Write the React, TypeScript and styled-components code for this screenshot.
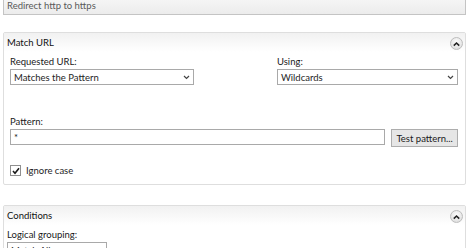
import React from 'react';
import styled, { createGlobalStyle } from 'styled-components';

const GlobalStyle = createGlobalStyle`
  html, body {
    margin: 0;
    padding: 0;
    background: #ffffff;
    overflow: hidden;
  }
  body {
    font-family: Lato, "Open Sans", "Liberation Sans", sans-serif;
    font-size: 9.5px;
    color: #1e1e1e;
  }
`

const Page = styled.div`
  width: 463px;
  padding-left: 3px;
  display: flex;
  flex-direction: column;
`

const NameBox = styled.div`
  margin-top: -3px;
  height: 17px;
  border: 1px solid #c4c4c4;
  border-top: 0;
  background: linear-gradient(#f7f7f7, #ececec);
  color: #5a5a5a;
  display: flex;
  align-items: center;
  padding: 0 3px;
`

const Panel = styled.section<{ $top: number }>`
  margin-top: ${props => props.$top}px;
  border: 1px solid #dedede;
  border-radius: 2px;
  background: #ffffff;
`

const PanelHeader = styled.div`
  height: 19px;
  display: flex;
  align-items: center;
  justify-content: space-between;
  padding: 0 2px 0 3px;
  background: linear-gradient(#f1f1f1, #ffffff);
  color: #111;
`

const CollapseButton = styled.button`
  width: 13px;
  height: 13px;
  padding: 0;
  border-radius: 50%;
  border: 1px solid #bdbdbd;
  background: radial-gradient(circle at 50% 35%, #fdfdfd, #d8d8d8);
  display: flex;
  align-items: center;
  justify-content: center;
  margin-top: 2px;
`

const PanelBody = styled.div<{ $inset: number }>`
  padding: 4px 7px 8px ${props => props.$inset}px;
`

const Label = styled.div`
  line-height: 12px;
  margin-bottom: 1px;
  color: #1a1a1a;
`

const TopRow = styled.div`
  display: grid;
  grid-template-columns: 184px 181px;
  column-gap: 83px;
`

const Field = styled.div`
  display: flex;
  flex-direction: column;
`

const Select = styled.div<{ $width?: number }>`
  height: 14px;
  width: ${props => (props.$width ? `${props.$width}px` : 'auto')};
  border: 1px solid #a9a9a9;
  background: #ffffff;
  display: flex;
  align-items: center;
  justify-content: space-between;
  padding: 0 3px 0 3px;
`

const PatternBlock = styled.div`
  margin-top: 31px;
`

const PatternRow = styled.div`
  display: flex;
  align-items: flex-start;
  gap: 6px;
`

const TextInput = styled.div`
  width: 368px;
  height: 14px;
  border: 1px solid #a9a9a9;
  background: #ffffff;
  padding: 0 3px;
  display: flex;
  align-items: center;
`

const TestButton = styled.button`
  width: 67px;
  height: 18px;
  border: 1px solid #adadad;
  background: #e6e6e6;
  font: inherit;
  color: #1a1a1a;
  padding: 0;
`

const CheckRow = styled.label`
  margin-top: 18px;
  display: flex;
  align-items: center;
  gap: 5px;
`

const CheckBox = styled.span`
  width: 9px;
  height: 9px;
  border: 1px solid #8f8f8f;
  background: #ffffff;
  display: flex;
  align-items: center;
  justify-content: center;
`

const Chevron = () => (
  <svg width="7" height="5" viewBox="0 0 7 5">
    <path d="M1 1 L3.5 3.5 L6 1" fill="none" stroke="#444" strokeWidth="1.2" />
  </svg>
)

const UpIcon = () => (
  <svg width="7" height="6" viewBox="0 0 7 6">
    <path d="M0.8 4.6 L3.5 2 L6.2 4.6" fill="none" stroke="#222" strokeWidth="1.6" />
  </svg>
)

const App = () => {
  return (
    <>
      <GlobalStyle />
      <Page>
        <NameBox>Redirect http to https</NameBox>

        <Panel $top={17}>
          <PanelHeader>
            <span>Match URL</span>
            <CollapseButton><UpIcon /></CollapseButton>
          </PanelHeader>
          <PanelBody $inset={6}>
            <TopRow>
              <Field>
                <Label>Requested URL:</Label>
                <Select>Matches the Pattern<Chevron /></Select>
              </Field>
              <Field>
                <Label>Using:</Label>
                <Select>Wildcards<Chevron /></Select>
              </Field>
            </TopRow>
            <PatternBlock>
              <Label>Pattern:</Label>
              <PatternRow>
                <TextInput>*</TextInput>
                <TestButton>Test pattern...</TestButton>
              </PatternRow>
            </PatternBlock>
            <CheckRow>
              <CheckBox>
                <svg width="8" height="8" viewBox="0 0 8 8">
                  <path d="M1 4 L3 6.2 L7 1.2" fill="none" stroke="#1a1a1a" strokeWidth="1.6" />
                </svg>
              </CheckBox>
              Ignore case
            </CheckRow>
          </PanelBody>
        </Panel>

        <Panel $top={20}>
          <PanelHeader>
            <span>Conditions</span>
            <CollapseButton><UpIcon /></CollapseButton>
          </PanelHeader>
          <PanelBody $inset={3}>
            <Label>Logical grouping:</Label>
            <Select $width={92}>Match All<Chevron /></Select>
          </PanelBody>
        </Panel>
      </Page>
    </>
  );
};

export default App;
